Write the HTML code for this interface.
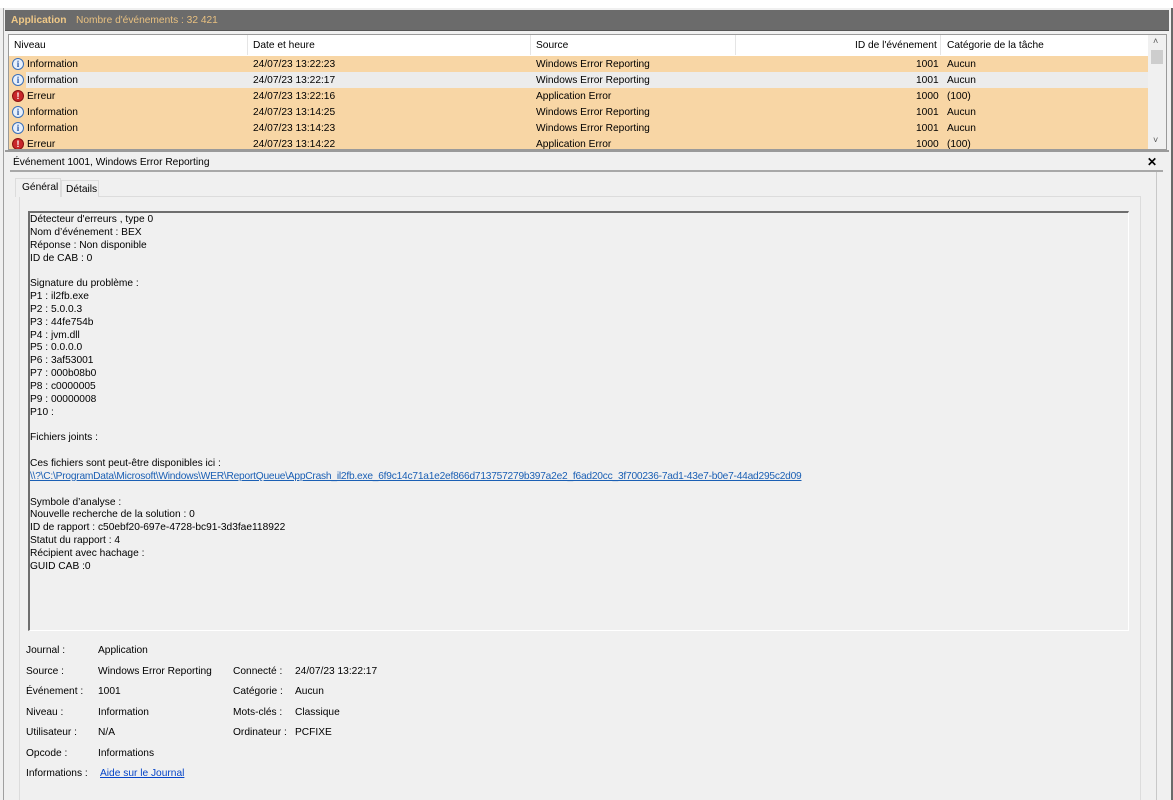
<!DOCTYPE html>
<html><head><meta charset="utf-8">
<style>
*{margin:0;padding:0;box-sizing:border-box}
body{width:1173px;height:800px;overflow:hidden;background:#f0f0f0;font-family:"Liberation Sans",sans-serif;font-size:10.2px;color:#000;position:relative}
.a{position:absolute;white-space:nowrap}
.row{position:absolute;left:9px;width:1139px;height:16px;background:#f8d6a5}
.row span{position:absolute;top:3px}
.ic{position:absolute;left:3px;top:2px;width:12px;height:12px;border-radius:50%;font-weight:bold;font-size:9px;line-height:11px;text-align:center}
.info{background:#e8f0fb;border:1px solid #3a6fb8;color:#2a5aa8;font-family:"Liberation Serif",serif}
.err{background:#c8262a;border:1px solid #8a1010;color:#fff}
.lbl{position:absolute;white-space:nowrap}
a{color:#0645c8;text-decoration:underline}
</style></head><body>
<div class="a" style="left:0;top:0;width:1173px;height:8px;background:#fff"></div>
<div class="a" style="left:3px;top:8px;width:1170px;height:792px;background:#f0f0f0;border-left:1px solid #a0a0a0;border-right:2px solid #6a6a6a"></div>
<div class="a" style="left:5px;top:10px;width:1164px;height:21px;background:#6b6b6b;border-bottom:1px solid #555"></div>
<div class="a" style="left:11px;top:15px;color:#f0c987;font-weight:bold">Application</div>
<div class="a" style="left:76px;top:15px;color:#e8c080">Nombre d'événements : 32 421</div>
<div class="a" style="left:8px;top:34px;width:1159px;height:116px;background:#fff;border:1px solid #9a9a9a"></div>
<div class="a" style="left:9px;top:35px;width:1139px;height:20px;background:#fff"></div>
<div class="a" style="left:247px;top:35px;width:1px;height:20px;background:#e5e5e5"></div>
<div class="a" style="left:530px;top:35px;width:1px;height:20px;background:#e5e5e5"></div>
<div class="a" style="left:735px;top:35px;width:1px;height:20px;background:#e5e5e5"></div>
<div class="a" style="left:940px;top:35px;width:1px;height:20px;background:#e5e5e5"></div>
<div class="a" style="left:14px;top:40px">Niveau</div>
<div class="a" style="left:253px;top:40px">Date et heure</div>
<div class="a" style="left:536px;top:40px">Source</div>
<div class="a" style="left:855px;top:40px">ID de l'événement</div>
<div class="a" style="left:947px;top:40px">Catégorie de la tâche</div>
<div class="a" style="left:1148px;top:35px;width:18px;height:114px;background:#f0f0f0"></div>
<div class="a" style="left:1151px;top:50px;width:12px;height:14px;background:#cdcdcd"></div>
<div class="a" style="left:1153px;top:36px;font-size:9px;color:#555">˄</div>
<div class="a" style="left:1153px;top:135px;font-size:9px;color:#555">˅</div>

<div class="row" style="top:56px"><div class="ic info">i</div><span style="left:18px">Information</span><span style="left:244px">24/07/23 13:22:23</span><span style="left:527px">Windows Error Reporting</span><span style="left:907px">1001</span><span style="left:938px">Aucun</span></div>
<div class="row" style="top:72px;background:linear-gradient(90deg,#f8d6a5 17px,#ececec 17px)"><div class="ic info">i</div><span style="left:18px">Information</span><span style="left:244px">24/07/23 13:22:17</span><span style="left:527px">Windows Error Reporting</span><span style="left:907px">1001</span><span style="left:938px">Aucun</span></div>
<div class="row" style="top:88px"><div class="ic err">!</div><span style="left:18px">Erreur</span><span style="left:244px">24/07/23 13:22:16</span><span style="left:527px">Application Error</span><span style="left:907px">1000</span><span style="left:938px">(100)</span></div>
<div class="row" style="top:104px"><div class="ic info">i</div><span style="left:18px">Information</span><span style="left:244px">24/07/23 13:14:25</span><span style="left:527px">Windows Error Reporting</span><span style="left:907px">1001</span><span style="left:938px">Aucun</span></div>
<div class="row" style="top:120px"><div class="ic info">i</div><span style="left:18px">Information</span><span style="left:244px">24/07/23 13:14:23</span><span style="left:527px">Windows Error Reporting</span><span style="left:907px">1001</span><span style="left:938px">Aucun</span></div>
<div class="row" style="top:136px;height:13px;overflow:hidden"><div class="ic err">!</div><span style="left:18px">Erreur</span><span style="left:244px">24/07/23 13:14:22</span><span style="left:527px">Application Error</span><span style="left:907px">1000</span><span style="left:938px">(100)</span></div>

<div class="a" style="left:5px;top:150px;width:1164px;height:2px;background:#9a9a9a"></div>
<div class="a" style="left:13px;top:157px">Événement 1001, Windows Error Reporting</div>
<div class="a" style="left:1147px;top:155px;font-weight:bold;font-size:12px">✕</div>
<div class="a" style="left:10px;top:170px;width:1153px;height:2px;background:#a8a8a8"></div>
<div class="a" style="left:1156px;top:172px;width:1px;height:628px;background:#c8c8c8"></div>

<div class="a" style="left:19px;top:196px;width:1122px;height:604px;background:#f0f0f0;border:1px solid #dcdcdc;border-bottom:none"></div>
<div class="a" style="left:15px;top:178px;width:46px;height:19px;background:#f0f0f0;border:1px solid #dcdcdc;border-bottom:none"></div>
<div class="a" style="left:22px;top:182px">Général</div>
<div class="a" style="left:61px;top:180px;width:38px;height:17px;border:1px solid #dcdcdc;border-bottom:none;background:#f0f0f0"></div>
<div class="a" style="left:66px;top:184px">Détails</div>

<div class="a" style="left:28px;top:211px;width:1101px;height:420px;border-top:2px solid #6e6e6e;border-left:2px solid #6e6e6e;border-right:1px solid #fff;border-bottom:1px solid #fff"></div>
<div class="a" style="left:30px;top:214px;line-height:12.85px">Détecteur d'erreurs , type 0<br>Nom d’événement : BEX<br>Réponse : Non disponible<br>ID de CAB : 0<br><br>Signature du problème :<br>P1 : il2fb.exe<br>P2 : 5.0.0.3<br>P3 : 44fe754b<br>P4 : jvm.dll<br>P5 : 0.0.0.0<br>P6 : 3af53001<br>P7 : 000b08b0<br>P8 : c0000005<br>P9 : 00000008<br>P10 :<br><br>Fichiers joints :<br><br>Ces fichiers sont peut-être disponibles ici :<br><a style="color:#1a5fb4;letter-spacing:-0.22px">\\?\C:\ProgramData\Microsoft\Windows\WER\ReportQueue\AppCrash_il2fb.exe_6f9c14c71a1e2ef866d713757279b397a2e2_f6ad20cc_3f700236-7ad1-43e7-b0e7-44ad295c2d09</a><br><br>Symbole d’analyse :<br>Nouvelle recherche de la solution : 0<br>ID de rapport : c50ebf20-697e-4728-bc91-3d3fae118922<br>Statut du rapport : 4<br>Récipient avec hachage :<br>GUID CAB :0</div>

<div class="lbl" style="left:26px;top:645px">Journal :</div><div class="lbl" style="left:98px;top:645px">Application</div>
<div class="lbl" style="left:26px;top:666px">Source :</div><div class="lbl" style="left:98px;top:666px">Windows Error Reporting</div>
<div class="lbl" style="left:233px;top:666px">Connecté :</div><div class="lbl" style="left:295px;top:666px">24/07/23 13:22:17</div>
<div class="lbl" style="left:26px;top:686px">Événement :</div><div class="lbl" style="left:98px;top:686px">1001</div>
<div class="lbl" style="left:233px;top:686px">Catégorie :</div><div class="lbl" style="left:295px;top:686px">Aucun</div>
<div class="lbl" style="left:26px;top:707px">Niveau :</div><div class="lbl" style="left:98px;top:707px">Information</div>
<div class="lbl" style="left:233px;top:707px">Mots-clés :</div><div class="lbl" style="left:295px;top:707px">Classique</div>
<div class="lbl" style="left:26px;top:727px">Utilisateur :</div><div class="lbl" style="left:98px;top:727px">N/A</div>
<div class="lbl" style="left:233px;top:727px">Ordinateur :</div><div class="lbl" style="left:295px;top:727px">PCFIXE</div>
<div class="lbl" style="left:26px;top:748px">Opcode :</div><div class="lbl" style="left:98px;top:748px">Informations</div>
<div class="lbl" style="left:26px;top:768px">Informations :</div><div class="lbl" style="left:100px;top:768px"><a>Aide sur le Journal</a></div>
</body></html>
